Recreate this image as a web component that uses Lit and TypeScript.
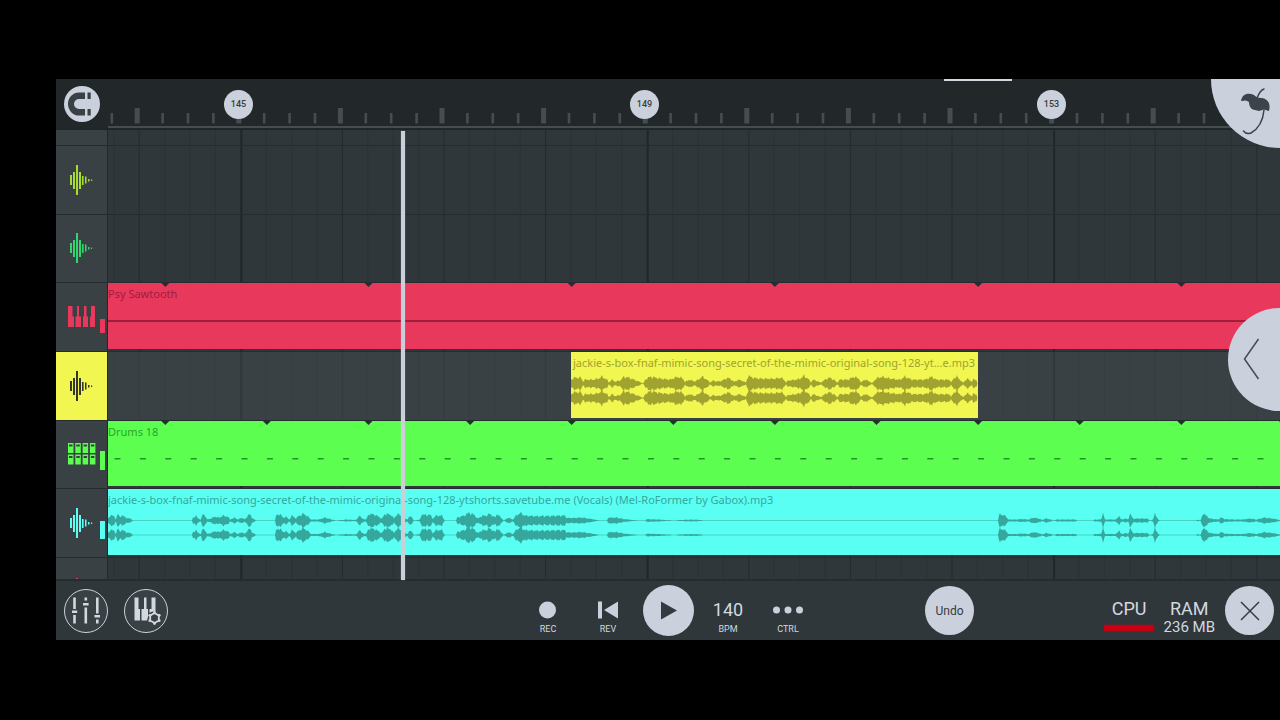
import { LitElement, html, svg, css, nothing } from "lit";
import { customElement } from "lit/decorators.js";
import { classMap } from "lit/directives/class-map.js";
import { styleMap } from "lit/directives/style-map.js";

type Envelope = number[][];

interface Clip {
  label: string;
  kind: "line" | "dashes" | "wave";
  start: number;
  length?: number;
  notchEvery?: number;
  wave?: Envelope;
}

interface Track {
  name: string;
  icon: "wave" | "keys" | "pads";
  color: string;
  ink: string;
  level?: number;
  selected?: boolean;
  clip?: Clip;
}

const BEAT = 25.4;
const SPAN_BEATS = 160;

const VOCALS: Envelope = [
  [0, 2], [2, 5], [6, 5], [8, 1], [10, 7], [12, 4], [16, 5], [19, 2], [22, 2.5], [25, 0],
  [84, 0], [85, 3], [88, 5], [90, 2], [93, 1], [95, 7], [98, 4], [99, 1], [103, 2], [107, 4], [111, 3], [115, 5],
  [120, 4], [122, 1], [127, 3], [130, 1], [134, 3], [137, 1], [141, 7], [144, 3], [148, 0],
  [167, 0], [168, 5], [172, 7], [175, 3], [178, 4], [181, 1], [184, 5], [188, 2], [191, 5], [196, 7], [200, 4], [203, 1],
  [211, 1], [217, 3], [224, 1], [228, 0], [238, 1], [246, 0.6], [249, 1], [251, 6], [254, 2], [258, 1], [261, 7],
  [267, 6], [274, 2], [277, 7], [283, 6], [286, 2], [289, 7], [295, 4], [299, 1], [303, 5], [306, 0],
  [312, 1], [314, 7], [319, 5], [321, 7], [325, 2], [328, 5], [334, 5], [337, 0],
  [348, 0], [349, 3], [356, 5], [361, 8], [366, 6], [370, 2], [374, 5], [378, 5], [382, 7], [387, 3], [389, 7],
  [394, 2], [396, 0], [400, 3], [405, 1], [408, 5], [412, 8], [417, 5], [430, 4.5], [457, 5], [459, 2.5],
  [474, 3], [484, 1.5], [491, 0], [499, 0], [500, 3], [509, 3], [516, 1.5], [530, 0], [537, 0], [539, 1.4],
  [550, 1], [566, 0], [576, 0.8], [590, 0.8], [596, 0],
  [890, 0], [892, 8], [895, 5], [898, 5], [900, 1], [907, 1], [914, 1.5], [921, 1], [925, 3], [931, 2], [934, 0.6],
  [938, 2], [943, 1], [945, 0], [949, 1], [968, 1], [969, 0], [985, 0], [987, 1], [993, 1], [995, 8], [997, 1],
  [1008, 1], [1011, 5], [1013, 1], [1018, 2], [1020, 1], [1022, 7], [1025, 2], [1039, 2], [1042, 0], [1045, 1],
  [1047, 8], [1050, 1], [1052, 0], [1088, 0], [1090, 1], [1092, 0], [1093, 1], [1095, 8], [1098, 5], [1102, 2],
  [1110, 1], [1113, 3], [1117, 1.4], [1128, 1], [1134, 1], [1142, 2], [1149, 1], [1156, 3], [1165, 2], [1174, 0],
  [4000, 0],
];

const SONG: Envelope = [
  [0, 4], [3, 6], [10, 6], [12, 2], [14, 4], [22, 4], [27, 5], [31, 7], [36, 4], [38, 1], [41, 4], [44, 2], [49, 3],
  [53, 7], [58, 6], [63, 4], [69, 1.5], [72, 0], [75, 5], [80, 7], [90, 5], [99, 4], [107, 7], [112, 5], [114, 1.5],
  [118, 4], [124, 2], [127, 4], [131, 7], [136, 4], [139, 1], [142, 3], [147, 2], [151, 3], [157, 6], [162, 3],
  [163, 1.5], [167, 4], [171, 3], [175, 1], [177, 8], [182, 6], [189, 5], [204, 5], [210, 6], [213, 4], [215, 1],
  [217, 3], [225, 4], [229, 5], [233, 8], [237, 5], [240, 1], [242, 4], [250, 1], [254, 4], [258, 6], [263, 4],
  [266, 1], [269, 4], [277, 4], [283, 7], [288, 5], [290, 1], [293, 4], [297, 3], [301, 0.5], [305, 5], [310, 7],
  [320, 5], [329, 4], [334, 7], [341, 4], [354, 4], [361, 7], [365, 4], [379, 4], [380, 1], [383, 6], [386, 7],
  [390, 3], [392, 1], [396, 5], [401, 2], [403, 5], [407, 2],
];

const TRACKS: Track[] = [
  { name: "Audio 1", icon: "wave", color: "#a6dc30", ink: "#333" },
  { name: "Audio 2", icon: "wave", color: "#32d56c", ink: "#333" },
  {
    name: "Psy Sawtooth", icon: "keys", color: "#e8395c", ink: "#a11d3c", level: 14,
    clip: { label: "Psy Sawtooth", kind: "line", start: 0, notchEvery: 8 },
  },
  {
    name: "Song", icon: "wave", color: "#f1f750", ink: "#a0a32f", selected: true,
    clip: {
      label: "jackie-s-box-fnaf-mimic-song-secret-of-the-mimic-original-song-128-yt...e.mp3",
      kind: "wave", start: 463, length: 407, wave: SONG,
    },
  },
  {
    name: "Drums 18", icon: "pads", color: "#5cff50", ink: "#2ba42a", level: 19,
    clip: { label: "Drums 18", kind: "dashes", start: 0, notchEvery: 4 },
  },
  {
    name: "Vocals", icon: "wave", color: "#5afff3", ink: "#36a79c", level: 18,
    clip: {
      label: "jackie-s-box-fnaf-mimic-song-secret-of-the-mimic-original-song-128-ytshorts.savetube.me (Vocals) (Mel-RoFormer by Gabox).mp3",
      kind: "wave", start: 0, wave: VOCALS,
    },
  },
];

/** Mirrored outline of an envelope around a centre line, with a fine ripple. */
function wavePath(points: Envelope, mid: number): string {
  const top: string[] = [];
  const bottom: string[] = [];
  for (let i = 0; i < points.length - 1; i++) {
    const [x0, a0] = points[i];
    const [x1, a1] = points[i + 1];
    const step = a0 === 0 && a1 === 0 ? x1 - x0 : 1;
    for (let x = x0; x < x1; x += step) {
      const base = a0 + ((a1 - a0) * (x - x0)) / (x1 - x0);
      const ripple = 0.95 + 0.16 * Math.sin(x * 2.3) + 0.14 * Math.sin(x * 5.1);
      const amp = base * ripple;
      top.push(`${x},${(mid - amp).toFixed(1)}`);
      bottom.push(`${x},${(mid + amp).toFixed(1)}`);
    }
  }
  return `M${top.join("L")}L${bottom.reverse().join("L")}Z`;
}

const beats = Array.from({ length: SPAN_BEATS }, (_, i) => i);

const icons = {
  wave: html`<svg width="26" height="32" viewBox="0 0 26 32" fill="currentColor" aria-hidden="true">
    <path d="M1 11h2v10H1zM4 8h2v17H4zM7 1h2v30H7zM10 8h2v17h-2zM13 12h1.600v9H13zM16 12.500h1.500v7H16zM19 15h1.500v2.500H19zM22 15.500h1.200v1.500H22z"/></svg>`,
  keys: html`<svg width="28" height="22" viewBox="0 0 28 22" fill="currentColor" aria-hidden="true">
    <path d="M0 0h4.500v10.500H6V21H0zM9 0h2v10.500h2V21H7.500V10.500H9zM16 0h2.500v10.500H20V21h-5V10.500h1zM23 0h4v21h-5V10.500h1z"/></svg>`,
  pads: html`<svg width="28" height="22" viewBox="0 0 28 22" fill="currentColor" aria-hidden="true">
    ${[0, 7.3, 14.6, 21.9].map((x) => [0, 11.5].map((y) => svg`<path fill-rule="evenodd" d="M${x} ${y}h5.500v10h-5.500zm1 1.500v2h3.500v-2z"/>`))}</svg>`,
};

@customElement("track-clip")
class TrackClip extends LitElement {
  static properties = { track: { attribute: false } };
  declare track: Track;

  static styles = css`
    :host { display: block; min-width: 0; }
    .clip { position: relative; height: 100%; overflow: hidden; box-sizing: border-box; }
    .art { position: absolute; inset: 0; width: 100%; height: 100%; }
    .label {
      position: relative; display: block; font-family: "Noto Sans", Roboto, sans-serif;
      font-size: 11px; line-height: 14px; padding-top: 4px; white-space: nowrap;
    }
    .inset { padding-left: 2px; }
  `;

  render() {
    const { clip, ink, color } = this.track;
    if (!clip) return nothing;
    return html`<div class="clip" style=${styleMap({ background: color, color: ink })}>
      <svg class="art" aria-hidden="true">
        ${clip.kind === "line" ? svg`<rect y="37" width="100%" height="2" fill=${ink} />` : nothing}
        ${clip.kind === "dashes"
          ? beats.map((b) => svg`<rect x=${6.5 + b * BEAT} y="37" width="6" height="1.500" fill="#249327" />`)
          : nothing}
        ${clip.wave
          ? [31.5, 46].map((y) => svg`
              <rect y=${y - 0.5} width="100%" height="1" fill=${ink} opacity="0.500" />
              <path d=${wavePath(clip.wave!, y)} fill=${ink} />`)
          : nothing}
        ${clip.notchEvery
          ? beats
              .filter((b) => (b - 2) % clip.notchEvery! === 0)
              .map((b) => {
                const x = 6.5 + b * BEAT;
                return svg`<path d="M${x - 4} 0h8l-4 4z" fill="#24302f" />`;
              })
          : nothing}
      </svg>
      <span class=${classMap({ label: true, inset: clip.start > 0 })}>${clip.label}</span>
    </div>`;
  }
}

@customElement("app-root")
class AppRoot extends LitElement {
  static styles = css`
    :host {
      display: grid; box-sizing: border-box; min-height: 100vh; padding: 79px 0 80px 56px;
      background: #000; color: #d3d8e0; font-family: Roboto, "Noto Sans", sans-serif; overflow: hidden;
    }
    button {
      font: inherit; color: inherit; background: none; border: 0; padding: 0; margin: 0; cursor: pointer;
    }
    svg { display: block; }
    .studio {
      position: relative; display: grid; grid-template-rows: 51px 1fr 60px;
      min-width: 0; background: #30373a; overflow: hidden;
    }
    .top { display: grid; grid-template-columns: 52px 1fr; background: #22282a; min-width: 0; border-bottom: 1px solid #1f2527; box-sizing: border-box; }
    .magnet {
      width: 36px; height: 36px; border-radius: 50%; background: #cbd1dc; color: #3a4145;
      place-self: center; display: grid; place-items: center;
    }
    .ruler { position: relative; overflow: hidden; min-width: 0; }
    .ticks { width: 100%; height: 100%; }
    .overview { position: absolute; top: 0; height: 2px; width: 68px; background: #d3d8e0; }
    .bar {
      position: absolute; top: 11px; width: 29px; height: 29px; margin-left: -15px; border-radius: 50%;
      background: #cbd1dc; color: #363c42; font-size: 9px; line-height: 28px; text-align: center; font-weight: 500;
    }
    .arrange { position: relative; display: grid; grid-template-rows: 16px repeat(6, minmax(0, 1fr)) 22px; min-width: 0; min-height: 0; }
    .grid { position: absolute; inset: 0 0 0 52px; overflow: hidden; }
    .grid svg { width: 100%; height: 100%; }
    .row { position: relative; display: grid; grid-template-columns: 52px minmax(0, 1fr); overflow: hidden; box-sizing: border-box; border-bottom: 1px solid #252c2f; }
    .row:last-child { border-bottom: 0; }
    .head {
      position: relative; background: #3a4145; border-right: 1px solid #22292b;
      display: grid; place-items: center; box-sizing: border-box;
    }
    .chosen .head { color: #33382a; }
    .chosen .lane { background: rgba(70, 78, 84, 0.450); }
    .cut { height: 70px; }
    .level { position: absolute; right: 2px; bottom: 18px; width: 5px; }
    .lane { display: grid; min-width: 0; padding-bottom: 2px; }
    .playhead { position: absolute; top: 1px; bottom: 0; width: 4px; background: #cbcfd7; box-shadow: 0 0 1px #cbcfd7; }
    .bottom {
      display: grid; grid-template-columns: 1fr 300px 1fr; align-items: center;
      border-top: 1px solid #262d2f; box-sizing: border-box; min-width: 0;
    }
    .tools { display: flex; gap: 16px; padding-left: 8px; }
    .ring {
      width: 44px; height: 44px; border: 1px solid #cbd1dc; border-radius: 50%; box-sizing: border-box;
      background: #3a4145; display: grid; place-items: center;
    }
    .transport { display: grid; grid-template-columns: repeat(5, 60px); align-items: center; justify-items: center; }
    .cell { display: grid; grid-template-rows: 26px 13px; justify-items: center; align-items: center; padding-top: 12px; }
    .caption { font-size: 9px; line-height: 13px; }
    .tempo { font-size: 18px; line-height: 26px; }
    .round {
      width: 49px; height: 49px; border-radius: 50%; background: #cbd1dc; color: #343b40;
      display: grid; place-items: center; font-size: 12px;
    }
    .play { width: 51px; height: 51px; }
    .right { display: flex; align-items: center; justify-content: space-between; padding: 0 6px 0 107px; }
    .status { display: flex; align-items: center; gap: 9px; }
    .stat { display: grid; grid-template-rows: 22px 15px; justify-items: center; align-items: center; min-width: 51px; padding-top: 12px; }
    .stat-name { font-size: 18px; line-height: 22px; }
    .stat-value { font-size: 15px; line-height: 15px; }
    .load { width: 50px; height: 6px; background: #c50013; box-shadow: 0 0 2px #c50013; }
    .close { margin-left: 1px; }
    .corner {
      position: absolute; top: 0; right: 0; width: 69px; height: 69px; background: #cbd1dc; color: #3d4449;
      border-bottom-left-radius: 100%;
    }
    .drawer {
      position: absolute; top: 50%; right: 0; width: 52px; height: 103px; margin-top: -52px;
      background: #cbd1dc; color: #454b57; border-radius: 52px 0 0 52px;
      display: grid; align-items: center; padding-left: 15px;
    }
  `;

  private renderRow(track: Track) {
    const { clip } = track;
    const paint = track.selected ? { background: track.color } : { color: track.color };
    return html`<div class=${classMap({ row: true, chosen: !!track.selected })}>
      <button class="head" aria-label=${track.name} style=${styleMap(paint)}>
        ${icons[track.icon]}
        ${track.level
          ? html`<span class="level" style=${styleMap({ height: `${track.level}px`, background: track.color })}></span>`
          : nothing}
      </button>
      <div class="lane">
        ${clip
          ? html`<track-clip .track=${track} style=${styleMap({
              marginLeft: `${clip.start}px`,
              width: clip.length ? `${clip.length}px` : "auto",
            })}></track-clip>`
          : nothing}
      </div>
    </div>`;
  }

  render() {
    return html`<main class="studio">
      <header class="top">
        <button class="magnet" aria-label="Snap">
          <svg width="28" height="24" viewBox="0 0 28 24" fill="currentColor" aria-hidden="true">
            <path d="M17 .5V7h-6a5 5 0 0 0 0 10h6v6.500h-6A11 11.500 0 0 1 11 .5zM19.500 .5h3.200V7h-3.200zM19.500 17h3.200v6.500h-3.200z"/></svg>
        </button>
        <div class="ruler">
          <svg class="ticks" aria-hidden="true">
            ${beats.map((b) => {
              const x = 3.8 + b * BEAT;
              const bar = b % 4 === 1;
              return svg`<rect x=${x - (bar ? 2.5 : 1.3)} y=${bar ? 29 : 34} width=${bar ? 5 : 2.6} height=${bar ? 15.5 : 10.5} fill="#454d50" />`;
            })}
            <rect y="47" width="100%" height="2" fill="#454d50" />
          </svg>
          ${[145, 149, 153].map(
            (n, i) => html`<span class="bar" style=${styleMap({ left: `${Math.round(3.8 + BEAT * (5 + i * 16))}px` })}>${n}</span>`
          )}
          <span class="overview" style=${styleMap({ left: "71.3%" })}></span>
        </div>
      </header>

      <section class="arrange" aria-label="Playlist">
        <div class="grid">
          <svg aria-hidden="true">
            ${beats.map((b) => {
              const x = 6.3 + b * BEAT;
              const phrase = b % 16 === 5;
              const bar = b % 4 === 1;
              return svg`<rect x=${x - 1} y="0" width=${phrase ? 2 : 1} height="100%" fill=${phrase ? "#20272a" : bar ? "#252c2f" : "#2b3235"} />`;
            })}
          </svg>
        </div>
        <div class="row"><div class="head"></div></div>
        ${TRACKS.map((t) => this.renderRow(t))}
        <div class="row">
          <button class="head cut" aria-label="Audio 3" style=${styleMap({ color: "#e8395c" })}>${icons.wave}</button>
        </div>
        <div class="playhead" style=${styleMap({ left: "345px" })}></div>
      </section>

      <footer class="bottom">
        <div class="tools">
          <button class="ring" aria-label="Mixer">
            <svg width="28" height="28" viewBox="0 0 28 28" fill="currentColor" aria-hidden="true">
              <path d="M1.200 .5h2.600v11.500H1.200zM-.2 13.500h5.400V16H-.2zM1.200 18h2.600v8.500H1.200zM12.500 .5h2.600v3h-2.600zM11 6h5.600v2.500H11zM12.500 10.500h2.600v16h-2.600zM24 .5h2.600v16H24zM22.500 18h5.600v2.500h-5.600zM24 22.500h2.600v4H24z"/></svg>
          </button>
          <button class="ring" aria-label="Instrument settings">
            <svg width="30" height="28" viewBox="0 0 30 28" aria-hidden="true">
              <path fill="currentColor" d="M3.500 .5H7.500V12h1.500v11.500H3.500zM13 .5h2.500V12H17v8l-1 3.500H10.500V12H13zM20.500 .5h4V14L20 15l-1.500 1V12h2z"/>
              <path fill="#3a4145" stroke="currentColor" stroke-width="1.800" stroke-linejoin="round" d="M23.500 16l4.300 2.500v5l-4.300 2.500l-4.300-2.500v-5z"/>
              <g fill="currentColor"><circle cx="23.500" cy="15.500" r="1.400"/><circle cx="28.200" cy="18.300" r="1.400"/><circle cx="28.200" cy="23.700" r="1.400"/><circle cx="23.500" cy="26.500" r="1.400"/><circle cx="18.800" cy="23.700" r="1.400"/><circle cx="18.800" cy="18.300" r="1.400"/></g></svg>
          </button>
        </div>

        <div class="transport">
          <button class="cell"><svg width="18" height="18" viewBox="0 0 18 18" fill="#cbd1dc" aria-hidden="true"><circle cx="8.500" cy="9" r="8.500"/></svg><span class="caption">REC</span></button>
          <button class="cell"><svg width="20" height="18" viewBox="0 0 20 18" fill="#cbd1dc" aria-hidden="true"><path d="M0 .5h4v17H0zM20 .5v17L6 9z"/></svg><span class="caption">REV</span></button>
          <button class="round play" aria-label="Play"><svg width="18" height="20" viewBox="0 0 18 20" fill="currentColor" aria-hidden="true"><path d="M2 .5v18l16-9z"/></svg></button>
          <button class="cell"><span class="tempo">140</span><span class="caption">BPM</span></button>
          <button class="cell"><svg width="30" height="18" viewBox="0 0 30 18" fill="#cbd1dc" aria-hidden="true"><circle cx="3.500" cy="9" r="3.500"/><circle cx="15" cy="9" r="3.500"/><circle cx="26.500" cy="9" r="3.500"/></svg><span class="caption">CTRL</span></button>
        </div>

        <div class="right">
          <button class="round">Undo</button>
          <div class="status">
            <div class="stat"><span class="stat-name">CPU</span><span class="load" role="meter" aria-label="CPU load" aria-valuenow="100"></span></div>
            <div class="stat"><span class="stat-name">RAM</span><span class="stat-value">236 MB</span></div>
            <button class="round close" aria-label="Close"><svg width="20" height="20" viewBox="0 0 20 20" fill="none" stroke="currentColor" stroke-width="1.500" aria-hidden="true"><path d="M1 1l18 18M19 1L1 19"/></svg></button>
          </div>
        </div>
      </footer>

      <button class="corner" aria-label="Island menu">
        <svg width="69" height="69" viewBox="0 0 69 69" aria-hidden="true">
          <path fill="currentColor" d="M30 22C31 15 37 13 43 16C46 19 49 19 51 19C57 20 60 25 58 32L53 30.500L48 32L44 31C40 31 38 27 38 23L35 21.500Z"/>
          <path fill="none" stroke="currentColor" stroke-width="1.500" stroke-linecap="round" d="M46 19C48 14 50 11 53 10M53 31C52 42 47 50 40 54C37 55 34 54 32.500 52"/></svg>
      </button>
      <button class="drawer" aria-label="Open panel">
        <svg width="18" height="42" viewBox="0 0 18 42" fill="none" stroke="currentColor" stroke-width="1.500" aria-hidden="true"><path d="M15.500 1L1.500 21l14 20"/></svg>
      </button>
    </main>`;
  }
}
